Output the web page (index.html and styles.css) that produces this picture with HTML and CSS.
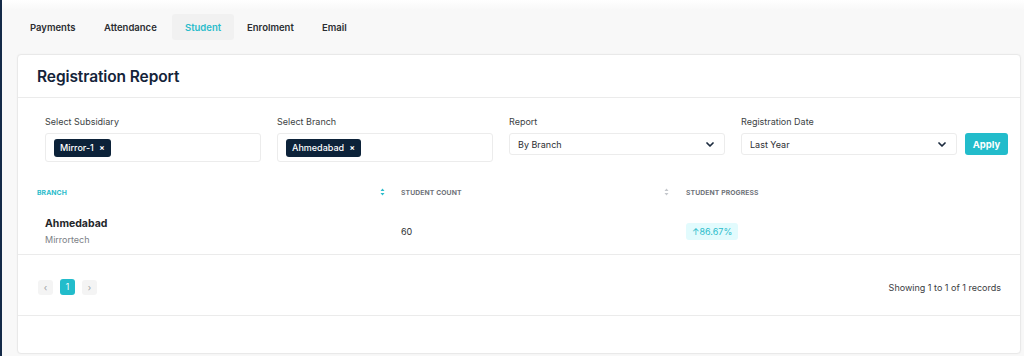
FILE: index.html
```html
<!DOCTYPE html>
<html>
<head>
<meta charset="utf-8">
<link rel="stylesheet" href="styles.css">
</head>
<body>
<div class="page">
  <nav class="tabs">
    <span class="tab">Payments</span>
    <span class="tab">Attendance</span>
    <span class="tab active">Student</span>
    <span class="tab">Enrolment</span>
    <span class="tab">Email</span>
  </nav>
  <section class="card">
    <header class="card-head"><h1>Registration Report</h1></header>
    <div class="filters">
      <div class="field">
        <label>Select Subsidiary</label>
        <div class="multi"><span class="tag">Mirror-1 <b>×</b></span></div>
      </div>
      <div class="field">
        <label>Select Branch</label>
        <div class="multi"><span class="tag">Ahmedabad <b>×</b></span></div>
      </div>
      <div class="field">
        <label>Report</label>
        <div class="select"><span>By Branch</span><svg class="chev" viewBox="0 0 8 5" width="8" height="5"><path d="M1 1l3 3 3-3" fill="none" stroke="#1c2b3f" stroke-width="1.7" stroke-linecap="round" stroke-linejoin="round"/></svg></div>
      </div>
      <div class="field">
        <label>Registration Date</label>
        <div class="select"><span>Last Year</span><svg class="chev" viewBox="0 0 8 5" width="8" height="5"><path d="M1 1l3 3 3-3" fill="none" stroke="#1c2b3f" stroke-width="1.7" stroke-linecap="round" stroke-linejoin="round"/></svg></div>
      </div>
      <button class="apply">Apply</button>
    </div>
    <div class="table">
      <div class="thead">
        <div class="th c1 sorted">BRANCH<svg class="sort" viewBox="0 0 5 8" width="5" height="8"><path d="M2.5 0.5L4.5 3H0.5z M2.5 7.5L0.5 5h4z" fill="#2bbccb"/></svg></div>
        <div class="th c2">STUDENT COUNT<svg class="sort" viewBox="0 0 5 8" width="5" height="8"><path d="M2.5 0.5L4.5 3H0.5z M2.5 7.5L0.5 5h4z" fill="#c4c7cc"/></svg></div>
        <div class="th c3">STUDENT PROGRESS</div>
      </div>
      <div class="tr">
        <div class="td c1 branch"><strong>Ahmedabad</strong><span>Mirrortech</span></div>
        <div class="td c2">60</div>
        <div class="td c3"><span class="badge">↑86.67%</span></div>
      </div>
    </div>
    <div class="pager">
      <div class="pages">
        <span class="pg arrow">‹</span>
        <span class="pg current">1</span>
        <span class="pg arrow">›</span>
      </div>
      <div class="info">Showing 1 to 1 of 1 records</div>
    </div>
    <div class="card-foot"></div>
  </section>
</div>
</body>
</html>
```
FILE: styles.css
```css
* { box-sizing: border-box; }
html, body { margin: 0; padding: 0; }
body {
  width: 1024px;
  height: 356px;
  overflow: hidden;
  background: linear-gradient(#ffffff 0, #f8f8f8 10px, #f8f8f8 100%);
  font-family: Inter, "Noto Sans", sans-serif;
  color: #2d2f33;
  border-left: 2px solid #142a48;
}
.page { padding: 14px 3px 0 15px; }
.tabs { display: flex; height: 26px; }
.tab {
  height: 26px;
  line-height: 27px;
  padding: 0 13px;
  font-size: 9.5px;
  font-weight: 600;
  color: #2b2d31;
  border-radius: 3px;
}
.tab:nth-child(1) { width: 74px; }
.tab:nth-child(2) { width: 81px; }
.tab:nth-child(3) { width: 62px; }
.tab:nth-child(4) { width: 75px; }
.tab.active { background: #f1f1f1; color: #2bbccb; }
.card {
  margin-top: 14px;
  background: #fff;
  border: 1px solid #e9e9e9;
  border-radius: 4px;
  height: 300px;
  box-shadow: 0 0 2px rgba(0,0,0,0.04);
}
.card-head {
  height: 43px;
  padding: 0 19px;
  display: flex;
  align-items: center;
  border-bottom: 1px solid #ebebeb;
}
.card-head h1 {
  margin: 0;
  font-size: 15.5px;
  font-weight: 600;
  color: #142339;
  letter-spacing: -0.1px;
}
.filters {
  display: flex;
  align-items: flex-start;
  padding: 18px 12px 0 27px;
  gap: 16px;
}
.field { width: 216px; display: flex; flex-direction: column; }
.field label {
  font-size: 9px;
  color: #3c3f44;
  height: 12px;
  line-height: 12px;
  margin-bottom: 5px;
}
.multi {
  height: 29px;
  border: 1px solid #ececec;
  border-radius: 3px;
  padding: 4px 8px;
  display: flex;
  align-items: center;
}
.tag {
  background: #0c2239;
  color: #fff;
  font-size: 9px;
  font-weight: 500;
  height: 18px;
  line-height: 18px;
  padding: 0 6px;
  border-radius: 3px;
}
.tag b { font-size: 8px; margin-left: 3px; }
.select {
  height: 22px;
  border: 1px solid #ececec;
  border-radius: 3px;
  padding: 0 10px 0 8px;
  display: flex;
  align-items: center;
  justify-content: space-between;
  font-size: 9px;
  color: #2d2f33;
}
.apply {
  margin-left: -8px;
  margin-top: 17px;
  width: 43px;
  height: 22px;
  border: 0;
  border-radius: 3px;
  background: #22bccb;
  color: #fff;
  font-family: inherit;
  font-size: 9.5px;
  font-weight: 700;
  padding: 0;
}
.table { margin-top: 17px; }
.thead, .tr { display: flex; }
.thead { height: 26px; align-items: center; }
.th {
  font-size: 6.8px;
  font-weight: 700;
  color: #6f737a;
  display: flex;
  align-items: center;
  justify-content: space-between;
  letter-spacing: 0.1px;
}
.th.sorted { color: #2bbccb; }
.c1 { width: 373px; padding-left: 19px; padding-right: 6px; }
.c2 { width: 285px; padding-left: 10px; padding-right: 7px; }
.c3 { flex: 1; padding-left: 10px; }
.tr {
  height: 50px;
  padding-top: 4px;
  align-items: center;
  border-bottom: 1px solid #ebebeb;
}
.td { font-size: 9px; color: #2d2f33; }
.branch { padding-left: 27px; display: flex; flex-direction: column; }
.branch strong { font-size: 10.5px; font-weight: 700; color: #24262a; line-height: 16px; }
.branch span { font-size: 9px; color: #7c7f85; line-height: 16px; }
.badge {
  display: inline-block;
  background: #e2fbfd;
  color: #2bbccb;
  font-size: 9px;
  height: 17px;
  line-height: 17px;
  padding: 0 6px;
  border-radius: 3px;
}
.pager {
  height: 61px;
  padding: 4px 19px 0 20px;
  display: flex;
  align-items: center;
  justify-content: space-between;
  border-bottom: 1px solid #ebebeb;
}
.pages { display: flex; gap: 7px; align-items: center; }
.pg {
  width: 15px;
  height: 15px;
  border-radius: 3px;
  display: flex;
  align-items: center;
  justify-content: center;
  font-size: 8.5px;
}
.pg.arrow { background: #f4f4f4; color: #9a9da3; font-size: 9px; }
.pg.current { background: #22bccb; color: #fff; height: 16px; }
.info { font-size: 9px; color: #3a3d42; }
```
